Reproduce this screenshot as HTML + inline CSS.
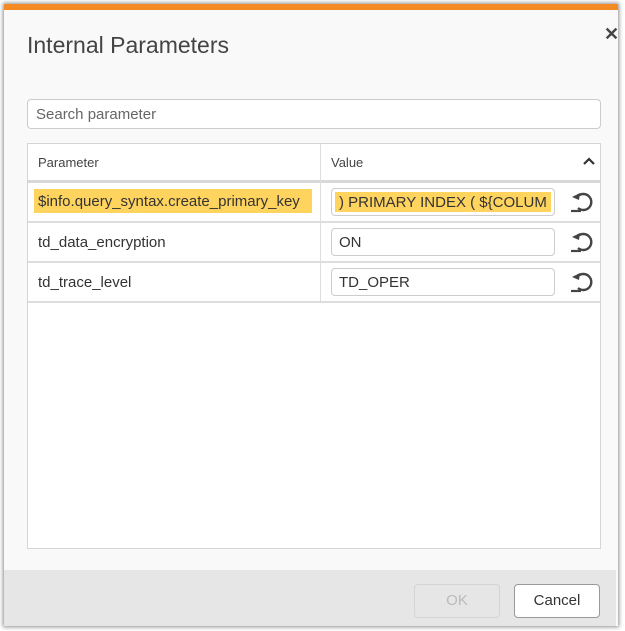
<!DOCTYPE html>
<html><head><style>
body{margin:0;width:625px;height:631px;background:#fff;font-family:"Liberation Sans",sans-serif;position:relative;overflow:hidden}
.dlg{position:absolute;left:4px;top:4px;width:614px;height:622px;background:#f9f9f9;box-shadow:0 0 4px 1px rgba(0,0,0,.45);border-top:6px solid #f38a24;box-sizing:border-box}
.title{position:absolute;left:23px;top:22px;font-size:23px;color:#444}
.x{position:absolute;left:600px;top:14px;font-size:18px;font-weight:bold;color:#444}
.search{position:absolute;left:23px;top:89px;width:574px;height:30px;border:1px solid #ccc;border-radius:4px;background:#fff;box-sizing:border-box;font-size:15px;color:#666;padding:6px 8px}
.tbl{position:absolute;left:23px;top:133px;width:574px;height:406px;border:1px solid #d5d5d5;background:#fff;box-sizing:border-box}
.hdr{position:absolute;left:0;top:0;width:572px;height:36px;border-bottom:3px solid #d8d8d8;font-size:13px;color:#444}
.vl{position:absolute;left:292px;top:0;width:1px;background:#ddd}
.row{position:absolute;left:0;width:572px;height:38px;border-bottom:2px solid #ddd;font-size:15px;color:#333}
.p{position:absolute;left:10px;top:11px}
.inp{position:absolute;left:303px;top:5px;width:224px;height:28px;border:1px solid #ccc;border-radius:4px;box-sizing:border-box;padding:5px 7px}
.ic{position:absolute;left:541px;top:8px}
.foot{position:absolute;left:0;top:560px;width:612px;height:56px;background:#e6e6e6}
.btn{position:absolute;top:14px;height:34px;width:86px;border-radius:4px;box-sizing:border-box;font-size:15px;text-align:center;line-height:32px}
</style></head><body>
<div class="dlg">
<div class="title">Internal Parameters</div>
<div class="x">✕</div>
<div class="search">Search parameter</div>
<div class="tbl">
 <div class="hdr"><span style="position:absolute;left:10px;top:11px">Parameter</span><span style="position:absolute;left:303px;top:11px">Value</span>
 <svg style="position:absolute;left:555px;top:13px" width="12" height="8"><path d="M1 7 L6 2 L11 7" stroke="#333" stroke-width="2.2" fill="none"/></svg></div>
 <div class="vl" style="top:0;height:39px"></div>
 <div class="row" style="top:39px"><div class="vl" style="height:38px"></div><span class="p" style="left:6px;top:6px;background:#ffd45e;padding:4px 0 3px 4px;width:274px">$info.query_syntax.create_primary_key</span><div class="inp" style="padding:3px"><div style="background:#ffd45e;height:20px;padding:0 4px;line-height:21px;white-space:nowrap;overflow:hidden">) PRIMARY INDEX ( ${COLUM</div></div><svg class="ic" width="24" height="22" viewBox="0 0 24 22"><path d="M9 5 A8 8 0 1 1 9 17" stroke="#444" stroke-width="2.4" fill="none"/><path d="M3 6 L11 2 L10 9 Z" fill="#444"/><path d="M2 20 H12" stroke="#444" stroke-width="2.2"/></svg></div>
 <div class="row" style="top:79px"><div class="vl" style="height:38px"></div><span class="p">td_data_encryption</span><div class="inp">ON</div><svg class="ic" width="24" height="22" viewBox="0 0 24 22"><path d="M9 5 A8 8 0 1 1 9 17" stroke="#444" stroke-width="2.4" fill="none"/><path d="M3 6 L11 2 L10 9 Z" fill="#444"/><path d="M2 20 H12" stroke="#444" stroke-width="2.2"/></svg></div>
 <div class="row" style="top:119px"><div class="vl" style="height:38px"></div><span class="p">td_trace_level</span><div class="inp">TD_OPER</div><svg class="ic" width="24" height="22" viewBox="0 0 24 22"><path d="M9 5 A8 8 0 1 1 9 17" stroke="#444" stroke-width="2.4" fill="none"/><path d="M3 6 L11 2 L10 9 Z" fill="#444"/><path d="M2 20 H12" stroke="#444" stroke-width="2.2"/></svg></div>
</div>
<div class="foot">
 <div class="btn" style="left:410px;border:1px solid #d4d4d4;color:#bbb">OK</div>
 <div class="btn" style="left:510px;border:1px solid #999;background:#fff;color:#333">Cancel</div>
</div>
</div>
</body></html>
